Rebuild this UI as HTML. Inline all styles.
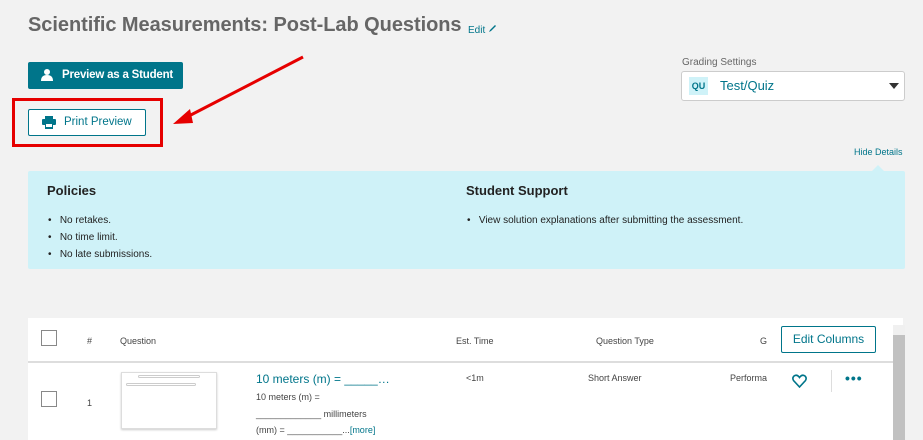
<!DOCTYPE html>
<html><head><style>
*{box-sizing:border-box;margin:0;padding:0}
body{width:923px;height:440px;overflow:hidden;background:#f2f2f2;font-family:"Liberation Sans",sans-serif;position:relative;color:#333}
.a{position:absolute}
h1{position:absolute;left:28px;top:14px;font-size:20px;font-weight:bold;color:#666;letter-spacing:-0.05px;white-space:nowrap}
.teal{color:#00758a}
</style></head><body>
<h1>Scientific Measurements: Post-Lab Questions</h1>
<div class="a teal" style="left:468px;top:24px;font-size:10px">Edit <svg width="9" height="9" viewBox="0 0 9 9"><path d="M1 8 L2 6 L7 1 L8 2 L3 7 Z" fill="#00758a"/></svg></div>

<div class="a" style="left:28px;top:62px;width:155px;height:27px;background:#00758a;border-radius:2px;color:#fff;font-size:11.5px;font-weight:bold;line-height:27px;padding-left:34px;letter-spacing:-0.2px;white-space:nowrap">Preview as a Student</div>
<svg class="a" style="left:41px;top:68px" width="12" height="13" viewBox="0 0 12 13"><circle cx="6" cy="4" r="3" fill="#fff"/><path d="M0 13 Q0 7 6 7 Q12 7 12 13Z" fill="#fff"/></svg>

<div class="a" style="left:12px;top:98px;width:151px;height:49px;border:3px solid #e60000"></div>
<div class="a" style="left:28px;top:109px;width:118px;height:27px;background:#fff;border:1px solid #00758a;border-radius:2px;color:#00758a;font-size:11.5px;line-height:25px;padding-left:35px">Print Preview</div>
<svg class="a" style="left:42px;top:116px" width="14" height="13" viewBox="0 0 14 13"><rect x="3" y="0" width="8" height="3" fill="#00758a"/><rect x="0" y="3" width="14" height="6" rx="1" fill="#00758a"/><rect x="3" y="7" width="8" height="6" fill="#00758a"/><rect x="4" y="8" width="6" height="3" fill="#fff"/></svg>

<svg class="a" style="left:0;top:0" width="923" height="440"><line x1="303" y1="57" x2="185" y2="118" stroke="#e60000" stroke-width="3"/><path d="M173 124 L190 109 L193 123 Z" fill="#e60000"/></svg>

<div class="a" style="left:682px;top:57px;font-size:10px;color:#666">Grading Settings</div>
<div class="a" style="left:681px;top:71px;width:224px;height:30px;background:#fff;border:1px solid #ccc;border-radius:3px"></div>
<div class="a" style="left:689px;top:77px;width:19px;height:18px;background:#cff2f8;color:#00758a;font-size:9px;font-weight:bold;text-align:center;line-height:18px">QU</div>
<div class="a teal" style="left:720px;top:78px;font-size:13px">Test/Quiz</div>
<svg class="a" style="left:889px;top:83px" width="10" height="6"><path d="M0 0 H10 L5 6Z" fill="#333"/></svg>

<div class="a teal" style="left:854px;top:147px;font-size:9px">Hide Details</div>
<svg class="a" style="left:871px;top:164px" width="14" height="8"><path d="M0 8 L7 1 L14 8Z" fill="#cff2f8"/></svg>
<div class="a" style="left:28px;top:171px;width:877px;height:98px;background:#cff2f8;border-radius:2px"></div>
<div class="a" style="left:47px;top:183px;font-size:13px;font-weight:bold;color:#222">Policies</div>
<div class="a" style="left:466px;top:183px;font-size:13px;font-weight:bold;color:#222">Student Support</div>
<div class="a" style="left:48px;top:212px;font-size:10px;line-height:17px;color:#222">
<div>• &nbsp;&nbsp;No retakes.</div><div>• &nbsp;&nbsp;No time limit.</div><div>• &nbsp;&nbsp;No late submissions.</div></div>
<div class="a" style="left:467px;top:212px;font-size:10px;line-height:17px;color:#222">• &nbsp;&nbsp;View solution explanations after submitting the assessment.</div>

<div class="a" style="left:28px;top:318px;width:875px;height:122px;background:#fff"></div>
<div class="a" style="left:28px;top:361px;width:875px;height:2px;background:#ddd"></div>
<div class="a" style="left:893px;top:325px;width:12px;height:115px;background:#f0f0f0"></div>
<div class="a" style="left:893px;top:335px;width:12px;height:105px;background:#c1c1c1"></div>
<div class="a" style="left:41px;top:330px;width:16px;height:16px;border:1px solid #888"></div>
<div class="a" style="left:41px;top:391px;width:16px;height:16px;border:1px solid #888"></div>
<div class="a" style="font-size:9px;color:#444;top:336px;left:87px">#</div>
<div class="a" style="font-size:9px;color:#444;top:336px;left:120px">Question</div>
<div class="a" style="font-size:9px;color:#444;top:336px;left:456px">Est. Time</div>
<div class="a" style="font-size:9px;color:#444;top:336px;left:596px">Question Type</div>
<div class="a" style="font-size:9px;color:#444;top:336px;left:760px">G</div>
<div class="a teal" style="left:781px;top:326px;width:95px;height:27px;border:1px solid #00758a;border-radius:2px;font-size:12px;line-height:25px;text-align:center">Edit Columns</div>
<div class="a" style="font-size:9px;color:#444;top:398px;left:87px">1</div>
<div class="a" style="left:121px;top:372px;width:96px;height:57px;border:1px solid #ddd;box-shadow:0 1px 2px #ccc;background:#fff"></div>
<div class="a" style="left:138px;top:375px;width:62px;height:3px;border:1px solid #ccc;border-radius:2px"></div>
<div class="a" style="left:126px;top:383px;width:70px;height:3px;border:1px solid #ccc;border-radius:2px"></div>
<div class="a teal" style="left:256px;top:372px;font-size:12px">10 meters (m) = _____…</div>
<div class="a" style="left:256px;top:389px;font-size:9px;line-height:16.5px;color:#444">10 meters (m) =<br>_____________ millimeters<br>(mm) = ___________...<span class="teal">[more]</span></div>
<div class="a" style="font-size:9px;color:#444;top:373px;left:466px">&lt;1m</div>
<div class="a" style="font-size:9px;color:#444;top:373px;left:588px">Short Answer</div>
<div class="a" style="font-size:9px;color:#444;top:373px;left:730px">Performa</div>
<svg class="a" style="left:792px;top:374px" width="15" height="14" viewBox="0 0 15 14"><path d="M7.5 13 L1.5 6.5 Q0 4 2 2 Q5 0 7.5 3.5 Q10 0 13 2 Q15 4 13.5 6.5Z" fill="none" stroke="#00758a" stroke-width="1.6"/></svg>
<div class="a" style="left:831px;top:370px;width:1px;height:22px;background:#ddd"></div>
<div class="a teal" style="left:845px;top:370px;font-size:14px;font-weight:bold;letter-spacing:1px">•••</div>
</body></html>
